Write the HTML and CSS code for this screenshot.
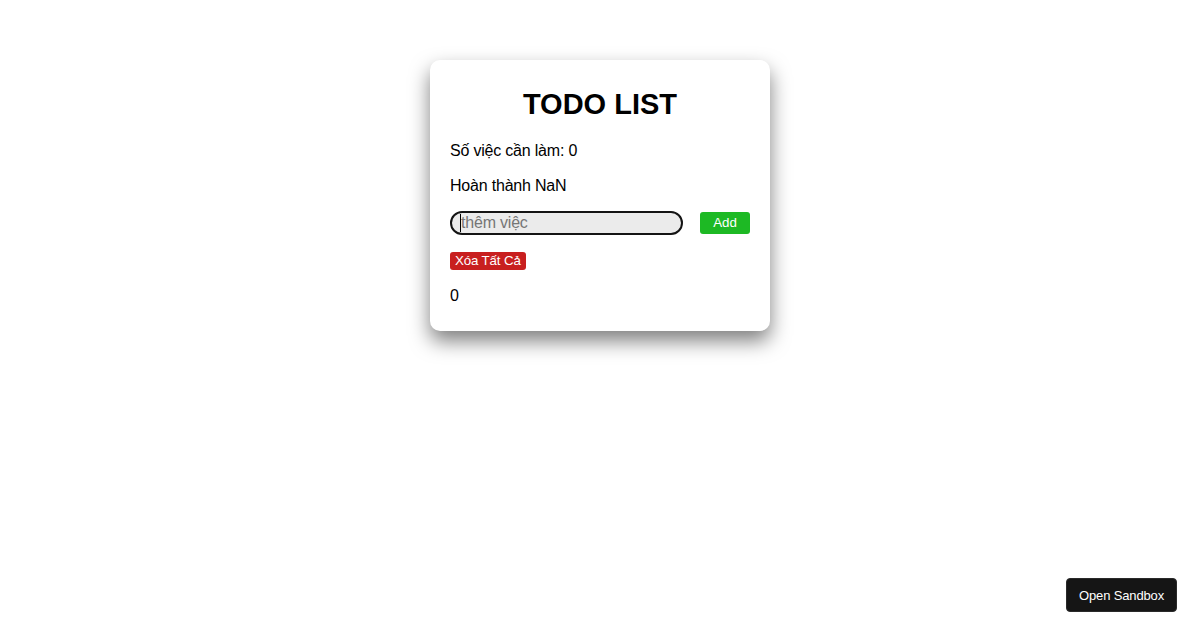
FILE: index.html
```html
<!DOCTYPE html>
<html lang="vi">
<head>
<meta charset="utf-8">
<title>Todo List</title>
<link rel="stylesheet" href="styles.css">
</head>
<body>
<div class="card">
  <h1 class="title">TODO LIST</h1>
  <p class="line">Số việc cần làm: 0</p>
  <p class="line">Hoàn thành NaN</p>
  <div class="add-row">
    <input class="task-input" type="text" placeholder="thêm việc">
    <button class="btn-add">Add</button>
  </div>
  <button class="btn-clear">Xóa Tất Cả</button>
  <p class="line">0</p>
</div>
<button class="sandbox">Open Sandbox</button>
</body>
</html>
```

FILE: styles.css
```css
html, body {
  margin: 0;
  padding: 0;
  background: #ffffff;
}
body {
  font-family: "Liberation Sans", Arial, sans-serif;
  color: #000;
  height: 630px;
  overflow: hidden;
}
.card {
  width: 300px;
  margin: 60px auto 0;
  padding: 10px 20px 10px;
  background: #fff;
  border-radius: 10px;
  box-shadow: 0 10px 20px rgba(0, 0, 0, 0.5);
}
.title {
  font-size: 29px;
  font-weight: bold;
  text-align: center;
  margin: 18.4px 0 20px;
}
.line {
  font-size: 16px;
  line-height: 19px;
  letter-spacing: -0.2px;
  margin: 16px 0;
}
.add-row {
  display: flex;
  align-items: center;
  justify-content: space-between;
  height: 24px;
  margin-top: -0.6px;
}
.task-input {
  box-sizing: border-box;
  width: 233px;
  height: 24px;
  border: 2px solid #141414;
  border-radius: 12px;
  background: linear-gradient(#000, #000) no-repeat 8px center / 1px 18px, #ebebeb;
  padding: 0 8px 0 9px;
  font-family: "Liberation Sans", Arial, sans-serif;
  font-size: 16px;
  letter-spacing: -0.2px;
  color: #000;
  outline: none;
}
.task-input::placeholder {
  color: #767676;
}
.btn-add {
  width: 50px;
  height: 22px;
  border: none;
  border-radius: 3px;
  background: #1db924;
  color: #fff;
  font-family: "Liberation Sans", Arial, sans-serif;
  font-size: 13.33px;
  padding: 0;
}
.btn-clear {
  display: block;
  margin-top: 17px;
  height: 18px;
  padding: 0 5px;
  border: none;
  border-radius: 3px;
  background: #c81f1f;
  color: #fff;
  font-family: "Liberation Sans", Arial, sans-serif;
  font-size: 13.33px;
  letter-spacing: -0.15px;
  line-height: 18px;
}
.sandbox {
  position: fixed;
  right: 23px;
  bottom: 18px;
  height: 34px;
  padding: 0 12px;
  border: 1px solid #2a2a2a;
  border-radius: 4px;
  background: #151515;
  color: #fff;
  font-family: "Liberation Sans", Arial, sans-serif;
  font-size: 13px;
  letter-spacing: -0.15px;
}
```
